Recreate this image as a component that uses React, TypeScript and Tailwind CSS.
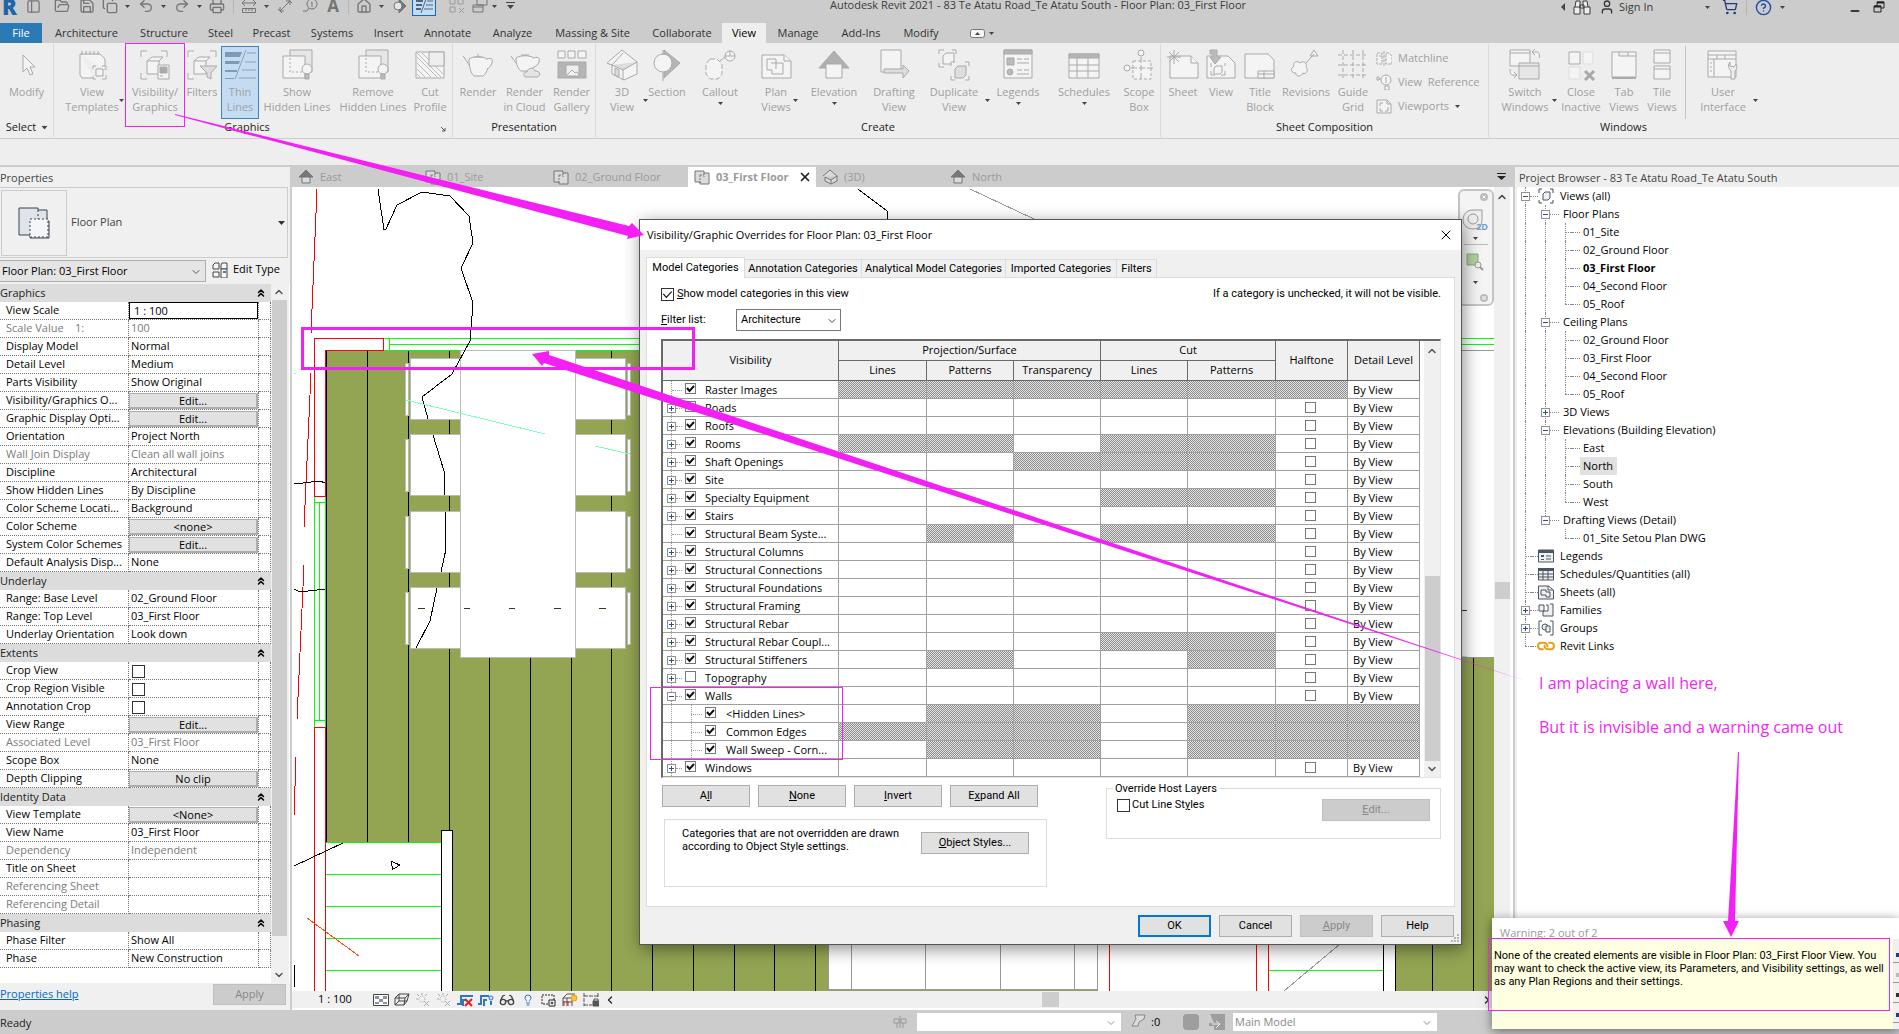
import { useState } from "react";
import type { ReactNode } from "react";
import {
  ChevronDown,
  ChevronLeft,
  ChevronRight,
  ChevronsUp,
  ChevronUp,
  CircleHelp,
  Copy,
  FolderOpen,
  Glasses,
  House,
  Lightbulb,
  Link,
  Minus,
  PanelLeft,
  Printer,
  Redo2,
  Save,
  ShoppingCart,
  Undo2,
  User,
  X,
} from "lucide-react";

/* ---------- ribbon icons ---------- */

const icons: Record<string, ReactNode> = {
  modify: <path d="M12 6v17l4-4 3 7 3-1-3-7h5z" />,
  templates: (
    <>
      <path d="M4 5h20l5 5v11M18 29H6l-2-3V5" />
      <path d="M6 2v4M10 2v4M14 2v4M18 2v4M22 2v4" />
      <path d="M17 20v-3h3M26 17h4v4M30 26v4h-4M20 30h-3v-3M20 20h7v7h-7z" />
    </>
  ),
  visibility: (
    <>
      <path d="M2 8V2h6M22 2h6v6M2 24v6h6" />
      <path d="M8 12l5-4h11l-4 4v13H8zM8 12h12" />
      <path d="M19 16h11v14H19z" />
      <path d="M21 18h7v6h-7zM21 27h3" fill="#aaa" />
    </>
  ),
  filters: (
    <>
      <path d="M2 8V2h6M24 2h6v6M2 24v6h6" />
      <path d="M8 12l5-4h11l-4 4v13H8zM8 12h12" />
      <path d="M14 17h17l-6 7v6l-4-2v-4z" fill="#ddd" />
    </>
  ),
  thin: (
    <>
      <path d="M1 3h17l-2 5H1zM1 12h15l-1 3H1zM1 21h12v2H1zM1 29h9v1H1z" fill="#7f9ab5" stroke="none" />
      <path d="M22 1L11 30M23 4h9M21 13h11M18 21h14M15 29h17" stroke="#8aa2ba" />
    </>
  ),
  show: (
    <>
      <path d="M9 1h22v22H9z" fill="#e6e6e6" />
      <path d="M2 7h22v22H2z" />
      <path d="M9 9v14h14" strokeDasharray="2 2" />
      <circle cx="26" cy="20" r="5" />
      <path d="M24 25h4v5h-4z" fill="#bbb" />
    </>
  ),
  cut: (
    <>
      <path d="M2 3h28v26H2z" />
      <path d="M3 8l20 20M3 14l14 14M3 20l8 8M8 4l21 21M3 4l24 24M3 25l3 3" stroke="#bbb" />
      <path d="M15 3h15v14H15z" fill="#eee" />
    </>
  ),
  teapot: (
    <>
      <path d="M7 10c4-3 14-3 18 0 3 6 0 14-4 17H12C9 24 7 19 7 10z" />
      <path d="M7 16L2 8l-1-1M25 10c5-2 6 1 5 4s-3 5-5 6M12 8h8M15 6h2" />
    </>
  ),
  cloud: (
    <>
      <path d="M7 9c4-3 14-3 18 0 3 6 0 10-4 13H12C9 20 7 15 7 9z" />
      <path d="M7 14L2 7M25 9c5-2 6 1 5 4s-3 4-5 5M12 6h8" />
      <path d="M17 28c-4-1-2-6 1-5 1-5 7-5 8-1 6 0 6 5 2 6z" fill="#e4e4e4" />
    </>
  ),
  gallery: (
    <>
      <path d="M2 2h7v7H2zM12 2h7v7h-7zM22 2h8v7h-8z" />
      <path d="M2 13h28v16H2z" fill="#b5b5b5" />
      <path d="M10 16h13v11H10z" fill="#eee" />
      <path d="M11 26l5-5 3 3 2-1 2 3" />
    </>
  ),
  house: (
    <>
      <path d="M1 14L16 1l15 12v12l-13 6-12-6V16z" />
      <path d="M6 16l11 5 14-8M17 21v10M9 19v7l4 2v-7z" fill="#ddd" />
      <path d="M1 14l5 2L17 4" />
    </>
  ),
  section: (
    <>
      <path d="M13 1l16 13-16 15z" fill="#b5b5b5" />
      <circle cx="12" cy="14" r="9" />
      <path d="M12 1v5M12 23v9" />
    </>
  ),
  callout: (
    <>
      <path d="M6 10h7l5 5v10l-4 5H6l-4-5V15z" strokeDasharray="5 2" />
      <circle cx="26" cy="7" r="5" />
      <path d="M16 12l5-4M21 7h10M26 2v5" />
    </>
  ),
  plan: (
    <>
      <path d="M2 6h22l7 6v17H2z" />
      <path d="M24 6v6h7" />
      <path d="M7 10h9v4h7v11H12v-4H7zM11 14h5M16 14v6" />
    </>
  ),
  elevation: (
    <>
      <path d="M16 2l15 17H1z" fill="#b0b0b0" />
      <path d="M8 15h16v14H8z" />
    </>
  ),
  drafting: (
    <>
      <path d="M3 1h20v22H3z" />
      <path d="M6 20h19v-4l6 6-6 7v-5H6z" fill="#ddd" />
    </>
  ),
  duplicate: (
    <>
      <path d="M1 5V1h5M14 1h4v4M1 14v4h5" />
      <path d="M5 7l3-3h8v9l-3 2H5z" />
      <path d="M13 17v-4h4M27 13h4v4M13 27v4h4M31 27v4h-4" />
      <path d="M17 20l3-3h8v9l-3 3h-8z" fill="#ddd" />
    </>
  ),
  legends: (
    <>
      <path d="M2 1h28v28H2z" />
      <path d="M2 1h28v4H2z" fill="#b5b5b5" />
      <path d="M5 9h7v7H5z" fill="#bbb" />
      <circle cx="8" cy="23" r="3" fill="#bbb" />
      <path d="M15 10h5M22 10h5M15 14h12M15 21h5M22 21h5M15 25h12" />
    </>
  ),
  schedules: (
    <>
      <path d="M1 5h30v24H1z" />
      <path d="M1 5h30v4H1z" fill="#b5b5b5" />
      <path d="M1 16h30M1 22h30M9 9v20M20 9v20" />
    </>
  ),
  scope: (
    <>
      <path d="M10 12h18v18H10z" strokeDasharray="3 2" />
      <path d="M18 8v24M8 19h24" strokeDasharray="6 2" />
      <circle cx="18" cy="4" r="3" />
      <circle cx="4" cy="19" r="3" />
    </>
  ),
  sheet: (
    <>
      <path d="M3 7h21l7 7v15H3z" />
      <path d="M24 7v7h7" />
      <path d="M7 1v14M0 8h14M2 3l10 10M12 3L2 13" />
    </>
  ),
  viewport: (
    <>
      <path d="M2 7h21l7 7v15H2z" />
      <path d="M5 1h7v7h4l-6 7-5-7h3V5H5z" fill="#bbb" />
      <path d="M6 18v-4M6 22v4h4M20 14v3M20 26h-4M20 26v-4M9 19l2-2h6v6l-2 2H9z" />
    </>
  ),
  title: (
    <>
      <path d="M1 5h23l6 6v18H1z" />
      <path d="M14 22h16v7H14zM14 25h16M20 22v7" />
    </>
  ),
  revisions: (
    <>
      <path d="M4 17c-2-4 4-6 6-3 3-3 8 0 6 4 3 3 0 8-3 6-2 5-8 3-7 0-5 0-6-4-2-7z" />
      <path d="M16 14l8-9M20 7h8l-4-6z" />
    </>
  ),
  grid: <path d="M6 1v30M16 1v30M26 1v30M1 6h30M1 16h30M1 26h30" strokeDasharray="4 2" />,
  switcher: (
    <>
      <path d="M1 1h20v16H1zM1 4h20" />
      <path d="M10 14h20v16H10zM10 17h20" fill="#e6e6e6" />
      <path d="M24 3h4c2 0 3 3 2 6M26 0l-3 3 3 3M1 20c0 5 1 7 6 6M5 23l3 3-3 3" />
    </>
  ),
  close: (
    <>
      <path d="M4 3h11v12H4z" />
      <path d="M18 3h10v12H18zM4 18h11v12H4z" stroke="#ddd" />
      <path d="M20 22l9 9M29 22l-9 9" strokeWidth="3" />
    </>
  ),
  tab: (
    <>
      <path d="M4 3h24v25H4zM11 3v4h17M20 3v4" />
      <path d="M4 29h24" strokeWidth="2" />
    </>
  ),
  tile: <path d="M8 1h16v13H8zM8 4h16M8 17h16v13H8zM8 20h16" />,
  ui: (
    <>
      <path d="M1 2h28v26H1zM1 6h28M1 10h28M7 10v18M10 6v4M18 6v4" />
      <path d="M3 14h2M3 18h2M3 22h2" />
      <path d="M23 13v4l4 1 2-3c2 3 0 6-1 7v8h-4v-8c-3-3-3-7-1-9z" fill="#eee" />
    </>
  ),
};

function RibbonIcon({ name }: { name: string }) {
  return (
    <svg viewBox="0 0 32 32" className="h-8 w-8 shrink-0" fill="#f4f4f4" stroke="#a9a9a9" strokeLinejoin="round">
      {icons[name]}
    </svg>
  );
}

type Tool = { icon: string; lines: string[]; width: string; arrow?: "side" | "below"; active?: boolean };

const selectTools: Tool[] = [{ icon: "modify", lines: ["Modify"], width: "w-[53px]" }];

const graphicsTools: Tool[] = [
  { icon: "templates", lines: ["View", "Templates"], width: "w-16", arrow: "side" },
  { icon: "visibility", lines: ["Visibility/", "Graphics"], width: "w-[62px]" },
  { icon: "filters", lines: ["Filters"], width: "w-8" },
  { icon: "thin", lines: ["Thin", "Lines"], width: "ml-[3px] w-[38px]", active: true },
  { icon: "show", lines: ["Show", "Hidden Lines"], width: "w-[76px]" },
  { icon: "show", lines: ["Remove", "Hidden Lines"], width: "w-[76px]" },
  { icon: "cut", lines: ["Cut", "Profile"], width: "w-[38px]" },
];

const presentationTools: Tool[] = [
  { icon: "teapot", lines: ["Render"], width: "w-[46px]" },
  { icon: "cloud", lines: ["Render", "in Cloud"], width: "w-[47px]" },
  { icon: "gallery", lines: ["Render", "Gallery"], width: "w-[47px]" },
];

const createTools: Tool[] = [
  { icon: "house", lines: ["3D", "View"], width: "w-[52px]", arrow: "side" },
  { icon: "section", lines: ["Section"], width: "w-[38px]" },
  { icon: "callout", lines: ["Callout"], width: "w-[68px]", arrow: "below" },
  { icon: "plan", lines: ["Plan", "Views"], width: "w-11", arrow: "side" },
  { icon: "elevation", lines: ["Elevation"], width: "w-[72px]", arrow: "below" },
  { icon: "drafting", lines: ["Drafting", "View"], width: "w-12" },
  { icon: "duplicate", lines: ["Duplicate", "View"], width: "w-[72px]", arrow: "side" },
  { icon: "legends", lines: ["Legends"], width: "w-14", arrow: "below" },
  { icon: "schedules", lines: ["Schedules"], width: "w-[76px]", arrow: "below" },
  { icon: "scope", lines: ["Scope", "Box"], width: "w-[34px]" },
];

const sheetTools: Tool[] = [
  { icon: "sheet", lines: ["Sheet"], width: "w-[34px]" },
  { icon: "viewport", lines: ["View"], width: "w-[42px]" },
  { icon: "title", lines: ["Title", "Block"], width: "w-9" },
  { icon: "revisions", lines: ["Revisions"], width: "w-14" },
  { icon: "grid", lines: ["Guide", "Grid"], width: "w-[38px]" },
];

const windowTools: Tool[] = [
  { icon: "switcher", lines: ["Switch", "Windows"], width: "w-16", arrow: "side" },
  { icon: "close", lines: ["Close", "Inactive"], width: "w-12" },
  { icon: "tab", lines: ["Tab", "Views"], width: "w-[38px]" },
  { icon: "tile", lines: ["Tile", "Views"], width: "w-[38px]" },
];

function Caret({ className = "" }: { className?: string }) {
  return (
    <svg viewBox="0 0 5 3" className={`h-[3px] w-[5px] shrink-0 ${className}`}>
      <path d="M0 0h5L2.500 3z" fill="#444" />
    </svg>
  );
}

function RibbonButton({ tool }: { tool: Tool }) {
  return (
    <button
      className={`relative flex h-[73px] shrink-0 flex-col items-center whitespace-nowrap pt-[3px] text-[#a0a0a0] ${tool.width} ${
        tool.active ? "bg-[#c4dcf1] outline outline-1 -outline-offset-1 outline-[#3b82c8]" : ""
      }`}
    >
      <RibbonIcon name={tool.icon} />
      <span className="mt-[3px] flex flex-col items-center leading-[15px]">
        {tool.lines.map((line) => (
          <span key={line}>{line}</span>
        ))}
      </span>
      {tool.arrow === "below" && <Caret className="mt-[3px]" />}
      {tool.arrow === "side" && <Caret className="absolute right-0 top-[53px]" />}
    </button>
  );
}

function RibbonPanel({ title, children, pad = "" }: { title: ReactNode; children: ReactNode; pad?: string }) {
  return (
    <section className="mt-px flex h-[93px] shrink-0 flex-col border-r border-[#dadada]">
      <div className={`flex pt-[2px] ${pad}`}>{children}</div>
      <div className="mt-auto flex h-[18px] items-center justify-center pb-px text-[#222]">{title}</div>
    </section>
  );
}

/* ---------- title bar and menu ---------- */

const menuTabs = [
  ["Architecture", "w-[87px]"],
  ["Structure", "w-[68px]"],
  ["Steel", "w-[45px]"],
  ["Precast", "w-[57px]"],
  ["Systems", "w-16"],
  ["Insert", "w-[49px]"],
  ["Annotate", "w-[69px]"],
  ["Analyze", "w-[61px]"],
  ["Massing & Site", "w-[99px]"],
  ["Collaborate", "w-20"],
  ["View", "w-11"],
  ["Manage", "w-16"],
  ["Add-Ins", "w-[62px]"],
  ["Modify", "w-[58px]"],
];

function TitleBar() {
  return (
    <header className="flex h-[23px] items-start overflow-hidden text-[#3b3b3b]">
      <div className="flex h-3 shrink-0 items-center text-[#757575]">
        <span className="w-[26px] pl-0.5 text-[22px] font-black leading-[10px] text-[#1f66a8]">R</span>
        <PanelLeft className="mr-[13px] size-[15px]" />
        <FolderOpen className="mr-[9px] size-4" />
        <Save className="mr-[7px] size-4" />
        <Copy className="mr-[7px] size-4" />
        <Caret className="mr-2" />
        <Undo2 className="mr-[7px] size-4" />
        <Caret className="mr-2" />
        <Redo2 className="mr-[7px] size-4" />
        <Caret className="mr-[7px]" />
        <Printer className="mr-2 size-4" />
        <span className="mr-[7px] h-4 w-px bg-[#b5b5b5]" />
        <svg viewBox="0 0 16 16" className="mr-[7px] size-4" fill="none" stroke="#757575">
          <path d="M1 5h14M4 2L1 5l3 3M12 2l3 3-3 3M1.500 10.500h13v4h-13zM5 11v2M8 11v2M11 11v2" />
        </svg>
        <Caret className="mr-2" />
        <svg viewBox="0 0 16 16" className="mr-[9px] size-4" fill="none" stroke="#757575">
          <path d="M3 13L13 3M9 3h4v4M3 9v4h4M1 11l4 4M11 1l4 4" />
        </svg>
        <svg viewBox="0 0 16 16" className="mr-[7px] size-4" fill="none" stroke="#757575">
          <circle cx="10" cy="6" r="5" />
          <path d="M9 5l1-1v5M1 13h4l2-3" />
        </svg>
        <span className="mr-[7px] w-4 text-center text-[17px] font-bold leading-4">A</span>
        <span className="mr-[7px] h-4 w-px bg-[#b5b5b5]" />
        <House className="mr-[7px] size-4" />
        <Caret className="mr-[7px]" />
        <svg viewBox="0 0 16 16" className="mr-[5px] size-4" fill="#e5e5e5" stroke="#757575">
          <path d="M8 1l7 7-7 7z" fill="#757575" />
          <circle cx="7" cy="8" r="4" />
        </svg>
        <span className="mr-[13px] flex h-5 w-6 items-center justify-center border border-[#1467c4] bg-[#c4dcf1]">
          <svg viewBox="0 0 18 14" className="h-3.5 w-[18px]" stroke="#4c6680" fill="none">
            <path d="M1 2h7M1 6h6M1 10h5" strokeWidth="2" />
            <path d="M11 0L6 14M12 2h6M11 6h7M9 10h9" />
          </svg>
        </span>
        <svg viewBox="0 0 16 16" className="mr-[7px] size-4" fill="none" stroke="#999">
          <path d="M1 1h5v5H1zM9 1h5v5H9zM1 9h5v5H1zM10 10l5 5M15 10l-5 5" />
        </svg>
        <svg viewBox="0 0 16 16" className="mr-1 size-4" fill="none" stroke="#757575">
          <path d="M5 1h10v6H5zM1 7h10v7H1zM1 9h10" />
        </svg>
        <Caret className="mr-[9px]" />
        <svg viewBox="0 0 9 8" className="h-2 w-[9px]" fill="#444">
          <path d="M0 0h9v1H0zM1 3h7L4.500 7z" />
        </svg>
      </div>
      <h1 className="flex-1 whitespace-nowrap text-center leading-[9px]">
        Autodesk Revit 2021 - 83 Te Atatu Road_Te Atatu South - Floor Plan: 03_First Floor
      </h1>
      <div className="flex h-[14px] shrink-0 items-center justify-end">
        <svg viewBox="0 0 4 8" className="mr-2 h-2 w-1" fill="#444">
          <path d="M4 0v8L0 4z" />
        </svg>
        <svg viewBox="0 0 18 16" className="mr-2 h-4 w-[18px]" fill="#eee" stroke="#3b3b3b">
          <path d="M2 8l1-6h4v6M10 8V2h4l1 6M1 8h6v7H1zM11 8h6v7h-6zM7 6h4v3H7z" />
        </svg>
        <User className="mr-1 size-4" />
        <button className="w-[86px] text-left">Sign In</button>
        <Caret className="mr-3" />
        <ShoppingCart className="mr-2 size-4 text-[#25377a]" />
        <span className="mr-2 h-4 w-px bg-[#b5b5b5]" />
        <CircleHelp className="mr-2 size-[17px] text-[#1e4fa3]" />
        <Caret />
        <button aria-label="Minimize" className="ml-16 mt-2">
          <Minus className="size-3" strokeWidth={4} />
        </button>
        <button aria-label="Restore" className="ml-3 mr-3.5">
          <svg viewBox="0 0 12 12" className="size-3" fill="none" stroke="#222">
            <path d="M1 5h7v6H1zM4 5V1h7v6H8" />
            <path d="M1 5.500h7M4 1.500h7" strokeWidth="2" />
          </svg>
        </button>
      </div>
    </header>
  );
}

function MenuBar() {
  return (
    <nav className="flex h-5 shrink-0 text-[#333]">
      <button className="mr-px w-[42px] bg-[#2a7ab5] text-white">File</button>
      {menuTabs.map(([name, width]) => (
        <button
          key={name}
          className={`shrink-0 whitespace-nowrap ${width} ${name === "View" ? "bg-[#eee] text-black" : ""}`}
        >
          {name}
        </button>
      ))}
      <button aria-label="Minimize ribbon" className="ml-5 flex items-center gap-1">
        <svg viewBox="0 0 15 9" className="h-[9px] w-[15px]" fill="#f5f5f5" stroke="#777">
          <rect x="0.500" y="0.500" width="14" height="8" rx="2" />
          <path d="M5 6l2.500-3L10 6z" fill="#444" stroke="none" />
        </svg>
        <Caret />
      </button>
    </nav>
  );
}

function Ribbon() {
  return (
    <div className="flex h-24 shrink-0 border-b border-[#ccc] bg-[#eee]">
      <RibbonPanel
        title={
          <>
            Select <Caret className="ml-1.5 scale-125" />
          </>
        }
      >
        {selectTools.map((t) => (
          <RibbonButton key={t.icon} tool={t} />
        ))}
      </RibbonPanel>
      <RibbonPanel
        pad="pl-1.5 pr-[3px]"
        title={
          <span className="relative w-full pr-3 text-center">
            Graphics
            <svg viewBox="0 0 5 5" className="absolute right-1.5 top-2 size-[5px]" stroke="#555" fill="none">
              <path d="M0 0l4 4M4 1v3H1" />
            </svg>
          </span>
        }
      >
        {graphicsTools.map((t) => (
          <RibbonButton key={t.lines[0]} tool={t} />
        ))}
      </RibbonPanel>
      <RibbonPanel title="Presentation" pad="pl-0.5">
        {presentationTools.map((t) => (
          <RibbonButton key={t.icon} tool={t} />
        ))}
      </RibbonPanel>
      <RibbonPanel title="Create" pad="pr-1">
        {createTools.map((t) => (
          <RibbonButton key={t.icon} tool={t} />
        ))}
      </RibbonPanel>
      <RibbonPanel title="Sheet Composition" pad="pl-[5px] pr-1.5">
        {sheetTools.map((t) => (
          <RibbonButton key={t.icon} tool={t} />
        ))}
        <div className="ml-1 flex w-[106px] flex-col text-[#a0a0a0]">
          {["Matchline", "View  Reference", "Viewports"].map((name, i) => (
            <button key={name} className="flex h-6 items-center gap-1.5 whitespace-pre">
              <svg viewBox="0 0 16 16" className="size-4" fill="#f4f4f4" stroke="#a9a9a9">
                {i === 0 && <path d="M1 3h5v11H1zM10 3h3l3 3v8h-6zM8 1v15M3 6h3" strokeDasharray="3 1" />}
                {i === 1 && (
                  <>
                    <circle cx="10" cy="6" r="5" />
                    <path d="M1 3h2v3H1zM3 5h2M10 3v6M9 12h4v4H9z" />
                  </>
                )}
                {i === 2 && <path d="M1 2h10l4 4v9H1zM11 2v4h4M4 8V5h3M4 10v3h3M12 9v4H9" />}
              </svg>
              {name}
              {i === 2 && <Caret />}
            </button>
          ))}
        </div>
      </RibbonPanel>
      <div className="relative mt-px flex h-[93px] flex-col">
        <div className="flex pl-1 pt-[2px]">
          {windowTools.map((t) => (
            <RibbonButton key={t.icon} tool={t} />
          ))}
          <span className="ml-1 mr-0.5 h-[73px] w-px bg-[#c4c4c4]" />
          <RibbonButton tool={{ icon: "ui", lines: ["User", "Interface"], width: "w-[70px]", arrow: "side" }} />
        </div>
        <div className="mt-auto flex h-[18px] items-center justify-center pb-px text-[#222]">Windows</div>
      </div>
    </div>
  );
}

/* ---------- properties palette ---------- */

type Prop = { name: string; value?: string; kind?: "button" | "check" | "input"; dim?: boolean };

const propertyGroups: { title: string; rows: Prop[] }[] = [
  {
    title: "Graphics",
    rows: [
      { name: "View Scale", value: "1 : 100", kind: "input" },
      { name: "Scale Value    1:", value: "100", dim: true },
      { name: "Display Model", value: "Normal" },
      { name: "Detail Level", value: "Medium" },
      { name: "Parts Visibility", value: "Show Original" },
      { name: "Visibility/Graphics O...", value: "Edit...", kind: "button" },
      { name: "Graphic Display Opti...", value: "Edit...", kind: "button" },
      { name: "Orientation", value: "Project North" },
      { name: "Wall Join Display", value: "Clean all wall joins", dim: true },
      { name: "Discipline", value: "Architectural" },
      { name: "Show Hidden Lines", value: "By Discipline" },
      { name: "Color Scheme Locati...", value: "Background" },
      { name: "Color Scheme", value: "<none>", kind: "button" },
      { name: "System Color Schemes", value: "Edit...", kind: "button" },
      { name: "Default Analysis Disp...", value: "None" },
    ],
  },
  {
    title: "Underlay",
    rows: [
      { name: "Range: Base Level", value: "02_Ground Floor" },
      { name: "Range: Top Level", value: "03_First Floor" },
      { name: "Underlay Orientation", value: "Look down" },
    ],
  },
  {
    title: "Extents",
    rows: [
      { name: "Crop View", kind: "check" },
      { name: "Crop Region Visible", kind: "check" },
      { name: "Annotation Crop", kind: "check" },
      { name: "View Range", value: "Edit...", kind: "button" },
      { name: "Associated Level", value: "03_First Floor", dim: true },
      { name: "Scope Box", value: "None" },
      { name: "Depth Clipping", value: "No clip", kind: "button" },
    ],
  },
  {
    title: "Identity Data",
    rows: [
      { name: "View Template", value: "<None>", kind: "button" },
      { name: "View Name", value: "03_First Floor" },
      { name: "Dependency", value: "Independent", dim: true },
      { name: "Title on Sheet" },
      { name: "Referencing Sheet", dim: true },
      { name: "Referencing Detail", dim: true },
    ],
  },
  {
    title: "Phasing",
    rows: [
      { name: "Phase Filter", value: "Show All" },
      { name: "Phase", value: "New Construction" },
    ],
  },
];

function PropertyValue({ row }: { row: Prop }) {
  if (row.kind === "button") {
    return (
      <button
        aria-label={row.name}
        className="mt-px block h-4 w-full border-2 border-l border-t border-[#adadad] bg-[#e1e1e1] text-center leading-[13px]"
      >
        {row.value}
      </button>
    );
  }
  if (row.kind === "check") {
    return (
      <input
        type="checkbox"
        aria-label={row.name}
        className="ml-[3px] mt-[3px] block size-[13px] appearance-none border border-[#333] bg-white"
      />
    );
  }
  if (row.kind === "input") {
    return (
      <input
        aria-label={row.name}
        defaultValue={row.value}
        className="block h-[17px] w-full border border-black bg-white pl-1 leading-[13px] outline-none"
      />
    );
  }
  return <span className="block pl-0.5">{row.value}</span>;
}

function Properties() {
  return (
    <aside className="flex w-[290px] shrink-0 flex-col bg-[#f0f0f0]">
      <h2 className="h-5 leading-[21px] text-[#444]">Properties</h2>
      <div className="mr-0.5 flex h-[71px] items-center border border-l-0 border-[#ccc] pl-px">
        <div className="flex size-[66px] items-center justify-center border border-[#ccc]">
          <svg viewBox="0 0 32 32" className="size-8" fill="#dfe3ea" stroke="#3d4450">
            <path d="M1 1h19v2h9v11h2v17H12v-3H1z" />
            <path d="M12 12h18v18H12z" fill="#f4f6fa" strokeDasharray="2 2" />
            <path d="M20 3v9" strokeDasharray="2 2" />
          </svg>
        </div>
        <span className="ml-1 flex-1 text-[#444]">Floor Plan</span>
        <svg viewBox="0 0 7 4" className="mr-0.5 h-1 w-[7px]" fill="#333">
          <path d="M0 0h7L3.500 4z" />
        </svg>
      </div>
      <div className="flex h-[26px] items-center pb-px">
        <div className="relative h-[22px] w-[206px]">
          <select
            aria-label="Type selector"
            className="h-full w-full appearance-none border border-l-0 border-[#adadad] bg-[#e5e5e5] pl-0.5 leading-[18px]"
          >
            <option>Floor Plan: 03_First Floor</option>
          </select>
          <ChevronDown className="pointer-events-none absolute right-1 top-1.5 size-3 text-[#555]" />
        </div>
        <button className="ml-1.5 flex items-center gap-[5px] pb-0.5">
          <svg viewBox="0 0 16 16" className="size-4" fill="#f6f6f6" stroke="#444">
            <path d="M1 3l2-2h4v6H1zM9 3l1-2h5v6H9zM1 10h6v5H1z" />
            <path d="M9 7h6v9H9z" />
            <path d="M11 9h3v2h-3z" fill="#3b7dc4" stroke="none" />
          </svg>
          Edit Type
        </button>
      </div>
      <div className="flex min-h-0 flex-1 bg-white">
        <table className="w-[271px] shrink-0 table-fixed border-separate border-spacing-0 self-start">
          <colgroup>
            <col className="w-[129px]" />
            <col className="w-[130px]" />
            <col className="w-3" />
          </colgroup>
          {propertyGroups.map((group) => (
            <tbody key={group.title}>
              <tr>
                <th colSpan={3} className="h-[18px] bg-[#dcdcdc] p-0 text-left font-normal leading-[18px] text-[#222]">
                  <span className="flex items-center justify-between pr-1">
                    {group.title}
                    <ChevronsUp className="size-3 text-black" strokeWidth={3} />
                  </span>
                </th>
              </tr>
              {group.rows.map((row) => (
                <tr key={row.name} className={`align-top leading-4 ${row.dim ? "text-[#7b7b7b]" : "text-black"}`}>
                  <td className="h-[18px] overflow-hidden whitespace-pre border-b border-r border-dotted border-[#777] p-0 pl-1.5">
                    {row.name}
                  </td>
                  <td className="border-b border-r border-dotted border-[#777] p-0">
                    <PropertyValue row={row} />
                  </td>
                  <td className="border-b border-r border-dotted border-[#777] p-0" />
                </tr>
              ))}
            </tbody>
          ))}
        </table>
        <div className="flex w-[18px] flex-col items-center bg-[#f0f0f0] pr-0.5">
          <ChevronUp className="my-0.5 size-3 text-[#555]" strokeWidth={3} />
          <div className="h-[636px] w-[15px] bg-[#cdcdcd]" />
          <ChevronDown className="mb-0.5 mt-auto size-3 text-[#555]" strokeWidth={3} />
        </div>
      </div>
      <div className="flex h-[27px] items-center justify-between pb-1 pr-1">
        <a href="#help" className="text-[#0066cc] underline">
          Properties help
        </a>
        <button disabled className="h-[21px] w-[73px] border border-[#bfbfbf] bg-[#ccc] text-[#888]">
          Apply
        </button>
      </div>
    </aside>
  );
}

/* ---------- drawing area ---------- */

const viewTabs = [
  { name: "East", icon: "elev", width: "w-[127px]" },
  { name: "01_Site", icon: "plan", width: "w-32" },
  { name: "02_Ground Floor", icon: "plan", width: "w-[141px]" },
  { name: "03_First Floor", icon: "plan", width: "w-32" },
  { name: "(3D)", icon: "3d", width: "w-32" },
  { name: "North", icon: "elev", width: "w-32" },
];

function ViewTabIcon({ kind }: { kind: string }) {
  return (
    <svg viewBox="0 0 16 16" className="size-4 shrink-0" fill="#dadada" stroke="#777">
      {kind === "elev" && (
        <>
          <path d="M8 1l7 7H1z" fill="#777" />
          <path d="M4 8h8v6H4z" />
        </>
      )}
      {kind === "plan" && (
        <>
          <path d="M1 2h9v2h5v11H6v-2H1z" />
          <path d="M6 6v9M6 6h4M10 4v4" strokeDasharray="2 1" />
        </>
      )}
      {kind === "3d" && <path d="M1 7l7-6 7 6v5l-6 3-6-3V8M3 8l6 3 6-4M9 11v4" />}
    </svg>
  );
}

const chairTops = [358, 434, 511, 587];
const boards = [367.5, 408.5, 449.5, 489.5, 530.5, 571.5, 611.5, 652.5, 693.5, 734.5, 774.5, 815.5];

/* Coordinates are those of the plan sheet, origin at the window corner */
function FloorPlan() {
  return (
    <svg
      viewBox="292 187 1202 804"
      preserveAspectRatio="xMinYMin slice"
      className="absolute inset-0 h-full w-full"
      fill="none"
      strokeWidth="1"
      shapeRendering="crispEdges"
    >
      <rect x="326" y="351" width="503" height="640" fill="#93a553" />
      <rect x="1396" y="658" width="98" height="333" fill="#93a553" />
      <g stroke="#000">
        <path d="M326.500 351V842" />
        {boards.map((x) => (
          <path key={x} d={`M${x} 351V991`} />
        ))}
        <path d="M1432.500 658V991M1473.500 658V991M1383.500 944V991M1395.500 944V991" />
      </g>
      <rect x="829" y="944" width="269" height="46" fill="#fff" />
      <rect x="829" y="990" width="269" height="1" fill="#93a553" />
      <rect x="326" y="842" width="115" height="149" fill="#fff" />
      <path d="M326 842.500H441M326 874.500H441M326 906.500H441M326 938.500H441M326 970.500H441" stroke="#0f0" />
      <path d="M441.500 991V830.500H452.500V991" fill="#fff" stroke="#000" />

      {/* dining table and chairs */}
      <g fill="#fff" stroke="#bbb">
        {chairTops.map((y) => (
          <g key={y}>
            <rect x="410.500" y={y + 0.5} width="50" height="61" />
            <rect x="575.500" y={y + 0.5} width="50" height="61" />
            <rect x="405.500" y={y + 5.5} width="3" height="52" />
            <rect x="627.500" y={y + 5.5} width="3" height="52" />
          </g>
        ))}
        <rect x="460.500" y="350.500" width="115" height="307" />
      </g>
      <path d="M418 608.500h7M464 608.500h6M509 608.500h6M554 608.500h7M599 608.500h7M1462 610.500h5" stroke="#24481c" />

      {/* glazing and walls */}
      <path d="M384 338.500H1494M389 344.500H1494M389.500 338V350M384 350.500H460M576 350.500H640" stroke="#0f0" />
      <path d="M314.500 496V727M319.500 502V720M325.500 496V727M314 502.500H326M314 720.500H326" stroke="#0f0" />
      <path d="M1268 970.500H1383" stroke="#0f0" />
      <path
        d="M314.500 496.500V338.500H383.500V350.500H325.500V496.500zM314.500 991V727.500H325.500V991M1109.500 944V991M1256.500 944V991M1268.500 944V991"
        stroke="#f00"
      />
      <path
        d="M828.500 944V991M851.500 944V989M925.500 944V989M1000.500 944V989M1074.500 944V989M1097.500 944V989M829 989.500H1098M1462 350.500H1494M1462 657.500H1494M1284 991L1340 944M970 189L1034 219"
        stroke="#999"
      />
      <path d="M317 189L311 334M311 373L304 527M304 565L297 719M296 757L294 816" stroke="#f00" />

      {/* survey and tree outline */}
      <path
        d="M378 189L384 230L386 229L397 205L422 192L450 196L469 216L473 243L461 268L473 303L470 341L452 374L422 397L428 419M433 435L444 471L445 495M445 511L446 549L441 572M437 588L430 621L416 648"
        stroke="#000"
      />
      <path
        d="M294 484L320 481L325 483M294 589L300 592L325 589M294 866L343 843M391.500 861.500L400 865L392.500 869.500zM294.500 965V987M858 189L887 211V219"
        stroke="#000"
      />
      <path d="M406 400L545 434M595 446L630 454M294 373.500h2M1462 656.500h5" stroke="#7fffbf" />
      <path d="M307 918L359 956" stroke="#ff4a10" />
    </svg>
  );
}

function ViewControls() {
  return (
    <div className="flex h-[17px] items-center bg-[#f0f0f0] text-black">
      <span className="w-[81px] pl-[26px]">1 : 100</span>
      <div className="flex items-center gap-[5px] text-[#444]">
        <svg viewBox="0 0 16 12" className="h-3 w-4" fill="#fff" stroke="#444">
          <path d="M0.500 0.500h15v11h-15z" />
          <path d="M2 2h4v3H2zM10 2h4v3h-4zM6 5h4v3H6zM2 8h4v2H2zM10 8h4v2h-4z" fill="#8a929c" stroke="none" />
        </svg>
        <svg viewBox="0 0 16 13" className="h-[13px] w-4" fill="none" stroke="#444">
          <path d="M1 5l4-4h10l-2 7-3 4H1zM1 5h10l4-4M11 5l-1 7M5 1v7h8M5 8l-4 4" />
        </svg>
        {[0, 1].map((i) => (
          <svg key={i} viewBox="0 0 16 14" className="h-3.5 w-4" fill="none" stroke="#aaa">
            <circle cx="7" cy="6" r="3" strokeDasharray="1 1" />
            <path d="M7 0v2M1 6h2M2 1l2 2M12 1l-2 2M9 8l5 5M14 8l-5 5" />
          </svg>
        ))}
        <svg viewBox="0 0 16 14" className="h-3.5 w-4" fill="none" stroke="#2f78bd" strokeWidth="2">
          <path d="M0 11h4V3h12M6 13V7h3" />
          <path d="M8 6l7 7M15 6l-7 7" stroke="#d22" />
        </svg>
        <svg viewBox="0 0 16 14" className="h-3.5 w-4" fill="none" stroke="#2f78bd" strokeWidth="2">
          <path d="M0 11h3V3h8M6 13V7h3" />
          <circle cx="13" cy="5" r="2" strokeWidth="1" fill="#cfe6ff" />
          <path d="M13 8v4" />
        </svg>
        <Glasses className="size-4" />
        <Lightbulb className="mx-0.5 size-3 text-[#2f78bd]" />
        <svg viewBox="0 0 16 14" className="h-3.5 w-4" fill="none" stroke="#222">
          <path d="M1 2h12v9H1z" strokeDasharray="2 1" />
          <path d="M8 7h6v6H8z" fill="#fff" />
          <circle cx="11" cy="10" r="1" />
        </svg>
        <svg viewBox="0 0 16 14" className="h-3.5 w-4" fill="none" stroke="#555">
          <path d="M1 5l4-4h8M1 5h9v8M1 5v8M5 5v8M1 9h9" />
          <path d="M2 8v5M6 8v5" stroke="#c22" />
          <circle cx="12" cy="5" r="3" fill="#ffc03a" stroke="#f39a11" />
        </svg>
        <svg viewBox="0 0 16 14" className="h-3.5 w-4" fill="none" stroke="#555">
          <path d="M1 0v13M15 0v5M1 3h14M1 12h8" strokeDasharray="4 1" />
          <path d="M10 8h6v5h-6z" fill="#555" />
          <path d="M11 8V6h4v2" />
        </svg>
        <ChevronLeft className="size-3 text-[#333]" strokeWidth={3} />
      </div>
      <div className="ml-1 flex flex-1 items-center">
        <span className="flex-1" />
        <span className="h-[15px] w-[17px] bg-[#cdcdcd]" />
        <span className="flex-1" />
        <ChevronRight className="mr-5 size-3 text-[#333]" strokeWidth={3} />
      </div>
    </div>
  );
}

function Workspace() {
  return (
    <main className="flex min-w-0 flex-1 flex-col border-x-2 border-[#ccc]">
      <div className="flex h-5 shrink-0 items-stretch bg-[#ccc] text-[#9a9a9a]">
        {viewTabs.map((tab) => {
          const active = tab.name === "03_First Floor";
          return (
            <button
              key={tab.name}
              className={`flex shrink-0 items-center gap-1.5 whitespace-nowrap pl-1.5 ${tab.width} ${
                active ? "bg-white font-bold" : ""
              }`}
            >
              <ViewTabIcon kind={tab.icon} />
              {tab.name}
              {active && <X className="ml-auto mr-1 size-3.5 text-[#222]" strokeWidth={3} />}
            </button>
          );
        })}
        <svg viewBox="0 0 9 8" className="mb-auto ml-auto mr-[7px] mt-1.5 h-2 w-[9px]" fill="#222">
          <path d="M0 0h9v1H0zM0 3h9L4.500 7z" />
        </svg>
      </div>
      <div className="flex min-h-0 flex-1 bg-white">
        <div className="relative flex-1 overflow-hidden">
          <FloorPlan />
          {/* navigation bar */}
          <div className="absolute right-0 top-0.5 flex h-[117px] w-9 flex-col items-end rounded-md border-2 border-[#c4c4c4] bg-[#f4f4f4] px-1 py-0.5 text-[#999]">
            <svg viewBox="0 0 8 8" className="size-2" fill="#bbb" stroke="#fff">
              <circle cx="4" cy="4" r="4" stroke="none" />
              <path d="M2.500 2.500l3 3M5.500 2.500l-3 3" />
            </svg>
            <svg viewBox="0 0 24 24" className="mr-0.5 mt-2 size-6" fill="#eee" stroke="#999">
              <path d="M1 11C1 5 5 1 11 1h9v10c0 6-4 9-9 9S1 17 1 11z" />
              <circle cx="11" cy="10" r="5" />
            </svg>
            <span className="-mt-3 text-[9px] font-bold leading-[12px] text-[#6f9cc9]">2D</span>
            <Caret className="mr-2.5 mt-1" />
            <span className="mt-1 h-px w-full bg-[#bbb]" />
            <svg viewBox="0 0 18 18" className="mr-1 mt-2 size-[18px]" fill="#b4cfa0" stroke="#86a974">
              <path d="M1 1h11v11H1z" />
              <circle cx="12" cy="12" r="3" fill="#eee" stroke="#999" />
              <path d="M14 14l3 3" stroke="#999" strokeWidth="2" />
            </svg>
            <Caret className="mr-2.5 mt-2.5" />
            <svg viewBox="0 0 8 8" className="mt-auto size-2" fill="#bbb">
              <circle cx="4" cy="4" r="4" />
              <path d="M2 3h4M2 5h4" stroke="#fff" />
            </svg>
          </div>
        </div>
        <div className="mr-[3px] flex w-4 flex-col items-center bg-[#f0f0f0] pt-1">
          <ChevronUp className="size-3 text-[#444]" strokeWidth={3} />
          <div className="mt-[379px] h-[17px] w-[15px] bg-[#cdcdcd]" />
        </div>
      </div>
      <ViewControls />
      <div className="h-0.5 bg-white" />
    </main>
  );
}

/* ---------- project browser ---------- */

type Node = { text: string; level: 0 | 1 | 2; open?: boolean; icon?: string; last?: boolean; mark?: "bold" | "picked" };

const tree: Node[] = [
  { text: "Views (all)", level: 0, open: true, icon: "views" },
  { text: "Floor Plans", level: 1, open: true },
  { text: "01_Site", level: 2 },
  { text: "02_Ground Floor", level: 2 },
  { text: "03_First Floor", level: 2, mark: "bold" },
  { text: "04_Second Floor", level: 2 },
  { text: "05_Roof", level: 2, last: true },
  { text: "Ceiling Plans", level: 1, open: true },
  { text: "02_Ground Floor", level: 2 },
  { text: "03_First Floor", level: 2 },
  { text: "04_Second Floor", level: 2 },
  { text: "05_Roof", level: 2, last: true },
  { text: "3D Views", level: 1, open: false },
  { text: "Elevations (Building Elevation)", level: 1, open: true },
  { text: "East", level: 2 },
  { text: "North", level: 2, mark: "picked" },
  { text: "South", level: 2 },
  { text: "West", level: 2, last: true },
  { text: "Drafting Views (Detail)", level: 1, open: true, last: true },
  { text: "01_Site Setou Plan DWG", level: 2, last: true },
  { text: "Legends", level: 0, icon: "legend" },
  { text: "Schedules/Quantities (all)", level: 0, icon: "schedule" },
  { text: "Sheets (all)", level: 0, icon: "sheet" },
  { text: "Families", level: 0, open: false, icon: "family" },
  { text: "Groups", level: 0, open: false, icon: "group" },
  { text: "Revit Links", level: 0, icon: "link", last: true },
];

function Expander({ open }: { open: boolean }) {
  return (
    <svg viewBox="0 0 9 9" className="size-[9px] shrink-0" fill="#fff" shapeRendering="crispEdges">
      <rect x="0.500" y="0.500" width="8" height="8" stroke="#919191" />
      <path d={open ? "M2 4.500h5" : "M2 4.500h5M4.500 2v5"} stroke="#2b4d9b" />
    </svg>
  );
}

function TreeIcon({ kind }: { kind: string }) {
  if (kind === "link") return <Link className="size-4 rotate-45 text-[#e0a31a]" strokeWidth={3} />;
  return (
    <svg viewBox="0 0 16 16" className="size-4 shrink-0" fill="#eef0f4" stroke="#4d5561">
      {kind === "views" && <path d="M4 1H1v4M12 1h3v4M1 12v3h3M15 12v3h-3M5 6l2-2h5v6l-2 2H5z" />}
      {kind === "legend" && (
        <>
          <path d="M0.500 2h15v12h-15z" />
          <path d="M0 2h16v3H0zM3 7h3v2H3zM3 11h3v1H3z" fill="#4d5561" stroke="none" />
          <path d="M8 8h5M8 11h5" />
        </>
      )}
      {kind === "schedule" && (
        <>
          <path d="M0.500 3h15v11h-15zM0 8h16M0 11h16M5 4v10M10 4v10" />
          <path d="M0 2h16v3H0z" fill="#4d5561" stroke="none" />
        </>
      )}
      {kind === "sheet" && <path d="M0.500 2h10l5 4v9h-15zM10 2v4h5M3 6h5v2h4v5H8v-2H3z" />}
      {kind === "family" && <path d="M1 3h5v6H1zM8 3h2v6H5v5h10V2h-3" />}
      {kind === "group" && (
        <>
          <path d="M4 1H1v14h3M12 1h3v14h-3" fill="none" />
          <circle cx="7" cy="7" r="3" />
          <path d="M8 6h4v6H8z" />
        </>
      )}
    </svg>
  );
}

function TreeRow({ node }: { node: Node }) {
  const indent = ["w-1", "w-6", "w-11"][node.level];
  return (
    <li className="relative flex h-[18px] items-center whitespace-nowrap">
      {/* guide lines of the parent levels */}
      {node.level > 0 && <span className="absolute inset-y-0 left-2 border-l border-dotted border-[#888]" />}
      {node.level > 1 && !node.text.includes("Setou") && (
        <span className="absolute inset-y-0 left-7 border-l border-dotted border-[#888]" />
      )}
      <span className={`shrink-0 ${indent}`} />
      <span className="relative flex w-[9px] shrink-0 items-center self-stretch">
        <span
          className={`absolute left-1 top-0 border-l border-dotted border-[#888] ${node.last ? "h-[9px]" : "h-[18px]"}`}
        />
        <span className="relative z-10 flex">{node.open !== undefined && <Expander open={node.open} />}</span>
        {node.open === undefined && <span className="absolute left-1 w-2 border-t border-dotted border-[#888]" />}
      </span>
      <span
        className={`shrink-0 border-t border-dotted border-[#888] ${
          node.level === 0 ? "w-2" : node.level === 1 ? "w-[9px]" : "w-2.5"
        }`}
      />
      {node.icon && <TreeIcon kind={node.icon} />}
      <span
        className={`leading-[18px] ${node.icon ? "ml-1.5" : node.level === 2 ? "pl-[3px]" : "ml-1"} ${
          node.mark === "bold" ? "font-bold" : ""
        } ${node.mark === "picked" ? "bg-[#e1e1e1] pr-1" : ""}`}
      >
        {node.text}
      </span>
    </li>
  );
}

function ProjectBrowser() {
  return (
    <aside className="flex w-[384px] shrink-0 flex-col border-l-2 border-[#f0f0f0] bg-white">
      <h2 className="h-5 bg-[#eee] pl-0.5 leading-[21px] text-[#444]">
        Project Browser - 83 Te Atatu Road_Te Atatu South
      </h2>
      <ul className="text-black">
        {tree.map((node, i) => (
          <TreeRow key={i} node={node} />
        ))}
      </ul>
    </aside>
  );
}

/* ---------- visibility/graphics dialog ---------- */

// cells: one character per column, x = not applicable, . = empty
type Category = { name: string; cells: string; kind?: "leaf" | "child" | "open"; off?: boolean };

const categories: Category[] = [
  { name: "Raster Images", cells: "xxxxxx.", kind: "leaf" },
  { name: "Roads", cells: "......." },
  { name: "Roofs", cells: "......." },
  { name: "Rooms", cells: "xx.xx.." },
  { name: "Shaft Openings", cells: "..xxx.." },
  { name: "Site", cells: "......." },
  { name: "Specialty Equipment", cells: "...xx.." },
  { name: "Stairs", cells: "......." },
  { name: "Structural Beam Syste...", cells: ".x.xx..", kind: "leaf" },
  { name: "Structural Columns", cells: "......." },
  { name: "Structural Connections", cells: "......." },
  { name: "Structural Foundations", cells: "......." },
  { name: "Structural Framing", cells: "......." },
  { name: "Structural Rebar", cells: "......." },
  { name: "Structural Rebar Coupl...", cells: "...xx.." },
  { name: "Structural Stiffeners", cells: ".x..x.." },
  { name: "Topography", cells: ".......", off: true },
  { name: "Walls", cells: ".......", kind: "open" },
  { name: "<Hidden Lines>", cells: ".xx.xxx", kind: "child" },
  { name: "Common Edges", cells: "xxx.xxx", kind: "child" },
  { name: "Wall Sweep - Corn...", cells: ".xx.xxx", kind: "child" },
  { name: "Windows", cells: "......." },
];

function Tick({ id, on, label, small }: { id?: string; on: boolean; label?: string; small?: boolean }) {
  const [checked, setChecked] = useState(on);
  return (
    <span className={`relative block shrink-0 ${small ? "size-[11px]" : "size-[13px]"}`}>
      <input
        id={id}
        type="checkbox"
        aria-label={label}
        checked={checked}
        onChange={(e) => setChecked(e.target.checked)}
        className={`block size-full appearance-none border bg-white ${small ? "border-[#777]" : "border-[#333]"}`}
      />
      {checked && (
        <svg viewBox="0 0 11 11" className="pointer-events-none absolute inset-0 size-full" fill="none" stroke="#111">
          <path d="M2 5l2.500 3L9 3" strokeWidth={small ? 2 : 1} />
        </svg>
      )}
    </span>
  );
}

function CategoryRow({ row }: { row: Category }) {
  const child = row.kind === "child";
  const hatch = "bg-[repeating-conic-gradient(#8a8a8a_0_25%,#e6e6e6_0_50%)] bg-[length:2px_2px]";
  return (
    <tr className="leading-[17px]">
      <td className="h-[18px] border-b border-r border-[#a0a0a0] p-0">
        <div className="relative flex h-[17px] items-center pl-1">
          <span className="absolute inset-y-0 left-2 border-l border-dotted border-[#999]" />
          {child && <span className="absolute inset-y-0 left-7 border-l border-dotted border-[#999]" />}
          <span className="relative flex w-[9px] pt-0.5">
            {!child && row.kind !== "leaf" && <Expander open={row.kind === "open"} />}
          </span>
          <span
            className={`mr-[3px] mt-0.5 border-t border-dotted border-[#999] ${
              child ? "ml-[15px] w-[11px]" : row.kind === "leaf" ? "-ml-1 w-2.5" : "w-1.5"
            }`}
          />
          <span className="-mt-0.5">
            <Tick on={!row.off} label={row.name} small />
          </span>
          <span className={`whitespace-nowrap ${child ? "ml-2.5" : "ml-[9px]"}`}>{row.name}</span>
        </div>
      </td>
      {row.cells.split("").map((c, i) => (
        <td key={i} className={`border-b border-r border-[#a0a0a0] p-0 ${c === "x" ? hatch : "bg-white"}`}>
          {c === "." && i === 5 && (
            <span className="ml-[29px] block">
              <Tick on={false} label={`${row.name} halftone`} small />
            </span>
          )}
          {c === "." && i === 6 && <span className="block pl-[5px]">By View</span>}
        </td>
      ))}
    </tr>
  );
}

function DialogButton({
  children,
  className = "",
  disabled,
}: {
  children: ReactNode;
  className?: string;
  disabled?: boolean;
}) {
  return (
    <button
      disabled={disabled}
      className={`shrink-0 border text-center ${
        disabled ? "border-[#bfbfbf] bg-[#ccc] text-[#888]" : "border-[#adadad] bg-[#e1e1e1] text-black"
      } ${className}`}
    >
      {children}
    </button>
  );
}

const dialogTabs = [
  ["Annotation Categories", "w-[117px]"],
  ["Analytical Model Categories", "w-36"],
  ["Imported Categories", "w-[111px]"],
  ["Filters", "w-10"],
];

function OverridesDialog() {
  const headCell = "border-b border-r border-[#696969] bg-[#f0f0f0] p-0 font-normal";
  return (
    <div
      role="dialog"
      aria-labelledby="dialog-title"
      className="absolute left-[639px] top-[219px] flex h-[726px] w-[823px] flex-col border border-[#555] bg-[#f0f0f0] font-['Roboto','Liberation_Sans',sans-serif] text-[11px] text-black shadow-[2px_4px_16px_rgba(0,0,0,0.45)]"
    >
      <div className="flex h-[30px] shrink-0 items-center justify-between bg-white px-[7px] font-['Open_Sans',sans-serif]">
        <h2 id="dialog-title">Visibility/Graphic Overrides for Floor Plan: 03_First Floor</h2>
        <button aria-label="Close">
          <X className="size-4" strokeWidth={1.5} />
        </button>
      </div>

      <div className="mt-[7px] flex h-5 shrink-0 items-end pl-1.5">
        <button className="relative z-10 -mb-px h-[21px] w-[99px] border border-b-0 border-[#dcdcdc] bg-white">
          Model Categories
        </button>
        {dialogTabs.map(([name, width]) => (
          <button
            key={name}
            className={`h-[18px] shrink-0 whitespace-nowrap border border-b-0 border-l-0 border-[#dcdcdc] pt-px leading-4 ${width}`}
          >
            {name}
          </button>
        ))}
      </div>

      <div className="mx-1.5 flex h-[630px] flex-col border border-[#dcdcdc] bg-white pl-3.5 pr-[13px]">
        <div className="mt-2.5 flex h-[13px] items-center justify-between">
          <div className="flex items-center gap-[3px]">
            <Tick id="show-model" on />
            <label htmlFor="show-model">
              <u>S</u>how model categories in this view
            </label>
          </div>
          <p>If a category is unchecked, it will not be visible.</p>
        </div>
        <div className="mt-2 flex h-[22px] items-center">
          <label htmlFor="filter-list" className="w-[75px]">
            <u>F</u>ilter list:
          </label>
          <div className="relative h-[22px] w-[105px]">
            <select id="filter-list" className="h-full w-full appearance-none border border-[#777] bg-white pl-1">
              <option>Architecture</option>
            </select>
            <ChevronDown className="pointer-events-none absolute right-[3px] top-1.5 size-3 text-[#444]" />
          </div>
        </div>

        <div className="mt-2 flex h-[439px] shrink-0 overflow-hidden border border-l-2 border-t-2 border-[#e3e3e3] border-l-[#696969] border-t-[#696969]">
          <table className="w-[757px] shrink-0 table-fixed border-separate border-spacing-0 self-start font-['Open_Sans',sans-serif]">
            <colgroup>
              <col className="w-[176px]" />
              <col className="w-[88px]" />
              <col className="w-[87px]" />
              <col className="w-[87px]" />
              <col className="w-[87px]" />
              <col className="w-[88px]" />
              <col className="w-[72px]" />
              <col className="w-[72px]" />
            </colgroup>
            <thead>
              <tr>
                <th rowSpan={2} className={headCell}>
                  Visibility
                </th>
                <th colSpan={3} className={`h-5 ${headCell}`}>
                  Projection/Surface
                </th>
                <th colSpan={2} className={headCell}>
                  Cut
                </th>
                <th rowSpan={2} className={headCell}>
                  Halftone
                </th>
                <th rowSpan={2} className={headCell}>
                  Detail Level
                </th>
              </tr>
              <tr>
                {["Lines", "Patterns", "Transparency", "Lines", "Patterns"].map((h, i) => (
                  <th key={i} className={`h-5 ${headCell}`}>
                    {h}
                  </th>
                ))}
              </tr>
            </thead>
            <tbody>
              {categories.map((row) => (
                <CategoryRow key={row.name} row={row} />
              ))}
            </tbody>
          </table>
          <div className="ml-auto flex w-4 flex-col items-center bg-[#f0f0f0]">
            <ChevronUp className="mt-1 size-3 text-[#555]" strokeWidth={3} />
            <div className="mt-[219px] h-[185px] w-[15px] bg-[#cdcdcd]" />
            <ChevronDown className="mb-0.5 mt-auto size-3 text-[#555]" strokeWidth={3} />
          </div>
        </div>

        <div className="flex justify-between">
          <div className="pt-[7px]">
            <div className="flex gap-2 pl-px">
              <DialogButton className="h-[22px] w-[88px]">
                A<u>l</u>l
              </DialogButton>
              <DialogButton className="h-[22px] w-[88px]">
                <u>N</u>one
              </DialogButton>
              <DialogButton className="h-[22px] w-[88px]">
                <u>I</u>nvert
              </DialogButton>
              <DialogButton className="h-[22px] w-[88px]">
                E<u>x</u>pand All
              </DialogButton>
            </div>
            <div className="ml-[3px] mt-3 flex h-[68px] w-[383px] items-start justify-between border border-[#dcdcdc] pl-[17px] pr-[17px]">
              <p className="mt-[7px] leading-[13px]">
                Categories that are not overridden are drawn
                <br />
                according to Object Style settings.
              </p>
              <DialogButton className="mt-3 h-[22px] w-[108px]">
                <u>O</u>bject Styles...
              </DialogButton>
            </div>
          </div>
          <fieldset className="mt-1 flex h-[57px] w-[335px] items-start justify-between border border-[#dcdcdc] px-2.5">
            <legend className="-ml-1 px-0.5 leading-[13px]">Override Host Layers</legend>
            <div className="flex items-center gap-0.5 pt-0.5">
              <Tick id="cut-lines" on={false} />
              <label htmlFor="cut-lines">
                Cut Line St<u>y</u>les
              </label>
            </div>
            <DialogButton disabled className="mt-1 h-[22px] w-[108px]">
              <u>E</u>dit...
            </DialogButton>
          </fieldset>
        </div>
      </div>

      <div className="mt-2 flex justify-end gap-2 pr-[7px]">
        <DialogButton className="h-[22px] w-[73px] outline outline-2 -outline-offset-2 outline-[#0078d7]">OK</DialogButton>
        <DialogButton className="h-[22px] w-[73px]">Cancel</DialogButton>
        <DialogButton disabled className="h-[22px] w-[73px]">
          <u>A</u>pply
        </DialogButton>
        <DialogButton className="h-[22px] w-[73px]">Help</DialogButton>
      </div>
      <svg viewBox="0 0 8 8" className="absolute bottom-0.5 right-0.5 size-2" fill="#b5b5b5">
        <path d="M6 0h2v2H6zM3 3h2v2H3zM6 3h2v2H6zM0 6h2v2H0zM3 6h2v2H3zM6 6h2v2H6z" />
      </svg>
    </div>
  );
}

/* ---------- warning, status bar, mark-up ---------- */

function WarningPopup() {
  return (
    <div
      role="alert"
      className="absolute right-0 top-[918px] flex h-[111px] w-[407px] flex-col bg-white font-['Roboto','Liberation_Sans',sans-serif] text-[11px] text-black shadow-[0_2px_10px_rgba(0,0,0,0.5)]"
    >
      <h2 className="h-[21px] pl-2 pt-2 font-['Open_Sans',sans-serif] leading-[13px] text-[#999]">Warning: 2 out of 2</h2>
      <div className="flex flex-1">
        <p className="flex-1 whitespace-nowrap bg-[#ffffe1] pl-0.5 pt-2.5 leading-[13px]">
          None of the created elements are visible in Floor Plan: 03_First Floor View. You
          <br />
          may want to check the active view, its Parameters, and Visibility settings, as well
          <br />
          as any Plan Regions and their settings.
        </p>
        <div className="flex w-[6px] flex-col gap-1 bg-[#f0f0f0] pt-2">
          {["bg-[#223a8f]", "bg-[#bbb]", "bg-[#333]", "bg-[#223a8f]"].map((c, i) => (
            <button
              key={i}
              aria-label={`Warning action ${i + 1}`}
              className="flex h-4 items-center border-b border-[#999] pl-[3px]"
            >
              <span className={`h-1 w-[3px] ${c}`} />
            </button>
          ))}
        </div>
      </div>
    </div>
  );
}

function StatusBar() {
  return (
    <footer className="flex h-6 shrink-0 items-center bg-[#ccc] text-[#222]">
      <span className="w-[892px] pt-0.5">Ready</span>
      <svg viewBox="0 0 16 16" className="size-4" fill="none" stroke="#999">
        <path d="M2 5h5v4H2zM9 5h5v4H9zM5 9v5M11 9v5M8 2v12" />
      </svg>
      <div className="relative ml-[9px] h-[18px] w-[204px]">
        <select aria-label="Workset" className="size-full appearance-none bg-white" />
        <ChevronDown className="pointer-events-none absolute right-1 top-1 size-3 text-[#999]" />
      </div>
      <svg viewBox="0 0 16 16" className="ml-2.5 size-4" fill="#ddd" stroke="#888">
        <path d="M4 1h10l-1 4-5 3-1 4H1l4-7z" />
      </svg>
      <span className="ml-1 w-8 text-black">:0</span>
      <span className="size-4 rounded-sm bg-[#9e9e9e]" />
      <svg viewBox="0 0 16 16" className="ml-2.5 size-4" fill="#9e9e9e">
        <path d="M1 0h15v16H5v-4H0V9h5z" />
        <path d="M3 10h7M7 7l4 3-4 4" stroke="#eee" fill="none" />
      </svg>
      <div className="relative ml-2 h-[18px] w-[204px] text-[#888]">
        <select aria-label="Design option" className="size-full appearance-none bg-white pl-0.5 leading-[18px]">
          <option>Main Model</option>
        </select>
        <ChevronDown className="pointer-events-none absolute right-1 top-1 size-3" />
      </div>
    </footer>
  );
}

function Markup() {
  return (
    <>
      <svg className="pointer-events-none absolute inset-0 h-full w-full" fill="none" stroke="#f31ff5">
        <g shapeRendering="crispEdges">
          <path d="M125.500 43.500h59v83h-59z" />
          <path d="M302.500 328.500h391v40h-391z" strokeWidth="3" />
          <path d="M650.500 687.500h192v72h-192z" />
          <path d="M1488.500 938.500h401v72h-401z" />
        </g>
        <g fill="#f31ff5" stroke="none">
          <path d="M175 114L629 226L632 223L644 235L627 239L628 236L175 115z" />
          <path d="M532 354L549 351L549 355L1526 681L544 363L542 366z" />
          <path d="M1738 752L1728 921H1723L1731 937L1739 921H1735L1739 752z" />
        </g>
      </svg>
      <div className="absolute left-[1539px] top-[661px] text-base leading-[44px] text-[#f31ff5]">
        <p>I am placing a wall here,</p>
        <p>But it is invisible and a warning came out</p>
      </div>
    </>
  );
}

export default function App() {
  return (
    <div className="relative flex h-screen min-h-[1034px] w-full flex-col overflow-hidden bg-[#ccc] font-['Open_Sans',sans-serif] text-[11px] text-black">
      <TitleBar />
      <MenuBar />
      <Ribbon />
      <div className="h-[26px] shrink-0 bg-[#eee]" />
      <div className="mt-0.5 flex min-h-0 flex-1">
        <Properties />
        <Workspace />
        <ProjectBrowser />
      </div>
      <StatusBar />
      <OverridesDialog />
      <WarningPopup />
      <Markup />
    </div>
  );
}
